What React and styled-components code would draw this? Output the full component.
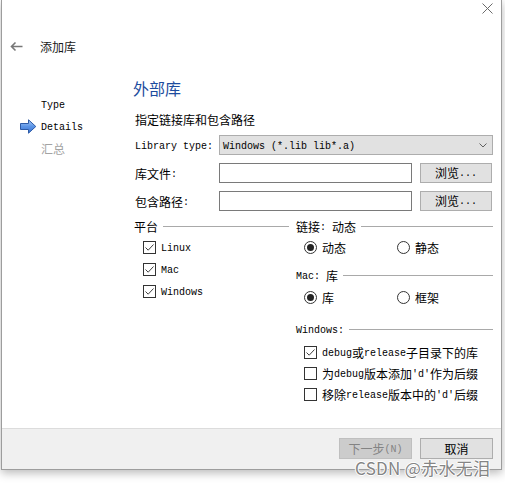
import React from "react";
import styled, { createGlobalStyle } from "styled-components";

const GlobalStyle = createGlobalStyle`
  html, body {
    margin: 0;
    padding: 0;
    background: #fff;
  }
  body {
    font-family: "Noto Sans CJK SC", "Noto Sans", sans-serif;
    font-size: 12px;
    color: #000;
    overflow: hidden;
    text-autospace: no-autospace;
  }
`;

const Page = styled.div`
  position: relative;
  width: 505px;
  height: 485px;
`;

const Dialog = styled.div`
  box-sizing: border-box;
  margin-left: 1px;
  width: 501px;
  height: 470px;
  border: 1px solid #9d9d9d;
  border-top: none;
  background: #fff;
  display: flex;
  flex-direction: column;
  box-shadow: 0 3px 9px rgba(0, 0, 0, 0.28);
`;

const TopBar = styled.div`
  box-sizing: border-box;
  height: 30px;
  display: flex;
  justify-content: flex-end;
  padding: 3px 8px 0 0;
`;

const Header = styled.div`
  height: 32px;
  display: flex;
  align-items: center;
  gap: 17px;
  padding-left: 8px;
  color: #1a1a1a;
`;

const Body = styled.div`
  flex: 1;
  display: flex;
  min-height: 0;
`;

const Nav = styled.div`
  box-sizing: border-box;
  width: 131px;
  flex: none;
  padding: 31px 0 0 18px;
`;

const NavItem = styled.div`
  height: 22px;
  display: flex;
  align-items: center;
  color: ${p => (p.$muted ? "#a3a3a3" : "#000")};
`;

const Marker = styled.span`
  width: 21px;
  flex: none;
  display: flex;
  align-items: center;
`;

const Content = styled.div`
  flex: 1;
  min-width: 0;
  padding: 16px 8px 0 0;
`;

const Heading = styled.h1`
  height: 20px;
  margin: 0 0 12px;
  font-size: 16px;
  line-height: 20px;
  font-weight: normal;
  color: #1d4c9e;
`;

const Intro = styled.div`
  height: 20px;
  line-height: 20px;
  margin-bottom: 5px;
  padding-left: 2px;
`;

const Form = styled.div`
  display: grid;
  grid-template-columns: 84px 1fr;
  grid-auto-rows: 20px;
  row-gap: 8px;
  padding-left: 2px;
`;

const Label = styled.div`
  display: flex;
  align-items: center;
  white-space: nowrap;
`;

const Combo = styled.div`
  box-sizing: border-box;
  height: 20px;
  display: flex;
  align-items: center;
  justify-content: space-between;
  padding: 0 5px 0 3px;
  border: 1px solid #adadad;
  background: #e1e1e1;
`;

const PathRow = styled.div`
  display: flex;
  gap: 8px;
`;

const TextInput = styled.input`
  box-sizing: border-box;
  width: 193px;
  height: 20px;
  margin: 0;
  border: 1px solid #7a7a7a;
  background: #fff;
  outline: none;
`;

const PushButton = styled.button`
  box-sizing: border-box;
  width: ${p => p.$width || 72}px;
  height: ${p => p.$height || 20}px;
  margin: 0;
  padding: 0;
  font-family: inherit;
  font-size: 12px;
  line-height: 1;
  border: 1px solid ${p => (p.disabled ? "#bfbfbf" : "#adadad")};
  background: ${p => (p.disabled ? "#cccccc" : "#e1e1e1")};
  color: ${p => (p.disabled ? "#838383" : "#000")};
`;

const Options = styled.div`
  display: grid;
  grid-template-columns: 155px minmax(0, 1fr);
  column-gap: 7px;
  margin-top: 5px;
  padding-left: 1px;
`;

const Column = styled.div`
  display: flex;
  flex-direction: column;
`;

const GroupHead = styled.div`
  height: ${p => p.$h || 20}px;
  margin-top: ${p => p.$top || 0}px;
  display: flex;
  align-items: center;
  gap: 5px;
  white-space: nowrap;

  &::after {
    content: "";
    flex: 1;
    height: 1px;
    background: #a9a9a9;
  }
`;

const CheckRow = styled.div`
  height: ${p => p.$h || 22}px;
  display: flex;
  align-items: center;
  gap: 5px;
  padding-left: ${p => p.$indent || 9}px;
  white-space: nowrap;
`;

const Box = styled.span`
  box-sizing: border-box;
  width: 13px;
  height: 13px;
  flex: none;
  border: 1px solid #333;
  background: #fff;
  display: flex;
`;

const RadioRow = styled.div`
  height: 22px;
  display: grid;
  grid-template-columns: 93px 1fr;
  align-items: center;
  padding-left: 8px;
`;

const RadioItem = styled.span`
  display: flex;
  align-items: center;
  gap: 5px;
`;

const Circle = styled.span`
  box-sizing: border-box;
  width: 13px;
  height: 13px;
  flex: none;
  border-radius: 50%;
  border: 1px solid #333;
  display: grid;
  place-items: center;

  &::after {
    content: "";
    width: 7px;
    height: 7px;
    border-radius: 50%;
    background: ${p => (p.$on ? "#222" : "transparent")};
  }
`;

const Spacer = styled.div`
  height: ${p => p.$h}px;
`;

const Footer = styled.div`
  box-sizing: border-box;
  height: 41px;
  flex: none;
  display: flex;
  justify-content: flex-end;
  align-items: flex-start;
  gap: 8px;
  padding: 9px 8px 0 0;
  border-top: 1px solid #dcdcdc;
  background: #f0f0f0;
`;

const Watermark = styled.div`
  position: absolute;
  left: 355px;
  top: 459px;
  font-size: 17px;
  line-height: 17px;
  color: #858585;
  letter-spacing: 0.3px;
  text-shadow: 1px 0 #fff, -1px 0 #fff, 0 1px #fff, 0 -1px #fff;
  white-space: nowrap;
`;

const Latin = styled.span`
  font-family: "Liberation Mono", "DejaVu Sans Mono", monospace;
  font-size: 10px;
  vertical-align: 2px;
`;

// ASCII runs take the narrow mono face, CJK stays in the 12px sans
const Txt = ({ children }) => (
  <span>
    {String(children)
      .split(/([\x20-\x7e]+)/)
      .filter(Boolean)
      .map((part, i) =>
        /^[\x20-\x7e]+$/.test(part) ? <Latin key={i}>{part}</Latin> : <React.Fragment key={i}>{part}</React.Fragment>
      )}
  </span>
);

const CloseIcon = () => (
  <svg width="11" height="11" viewBox="0 0 11 11">
    <path d="M0.5 0.5 L10.5 10.5 M10.5 0.5 L0.5 10.5" stroke="#6b6b6b" strokeWidth="1" fill="none" />
  </svg>
);

const BackIcon = () => (
  <svg width="13" height="11" viewBox="0 0 13 11">
    <path d="M12.5 5.5 H1.5 M5.5 1.5 L1.5 5.5 L5.5 9.5" stroke="#777" strokeWidth="1.6" fill="none" />
  </svg>
);

const StepArrow = () => (
  <svg width="17" height="15" viewBox="0 0 17 15">
    <defs>
      <linearGradient id="stepFill" x1="0" y1="0" x2="0" y2="1">
        <stop offset="0" stopColor="#a9ccf7" />
        <stop offset="0.5" stopColor="#5b94e6" />
        <stop offset="1" stopColor="#3a72d0" />
      </linearGradient>
    </defs>
    <path
      d="M0.5 4.5 H8.5 V0.8 L15.8 7.5 L8.5 14.2 V10.5 H0.5 Z"
      fill="url(#stepFill)"
      stroke="#2d5aa6"
      strokeWidth="1"
      strokeLinejoin="round"
    />
  </svg>
);

const Chevron = () => (
  <svg width="8" height="5" viewBox="0 0 8 5">
    <path d="M0.5 0.5 L4 4 L7.5 0.5" stroke="#606060" strokeWidth="1" fill="none" />
  </svg>
);

const Check = ({ on }) => (
  <Box>
    {on && (
      <svg width="11" height="11" viewBox="0 0 11 11">
        <path d="M1.5 5.5 L4.2 8.2 L9.5 2.5" stroke="#404040" strokeWidth="1" fill="none" />
      </svg>
    )}
  </Box>
);

const platforms = ["Linux", "Mac", "Windows"];

const winOptions = [
  { text: "debug或release子目录下的库", on: true },
  { text: "为debug版本添加'd'作为后缀", on: false },
  { text: "移除release版本中的'd'后缀", on: false },
];

const Radios = ({ left, right }) => (
  <RadioRow>
    <RadioItem>
      <Circle $on />
      {left}
    </RadioItem>
    <RadioItem>
      <Circle />
      {right}
    </RadioItem>
  </RadioRow>
);

export default function App() {
  return (
    <Page>
      <GlobalStyle />
      <Dialog>
        <TopBar>
          <CloseIcon />
        </TopBar>
        <Header>
          <BackIcon />
          <span>添加库</span>
        </Header>
        <Body>
          <Nav>
            <NavItem>
              <Marker />
              <Txt>Type</Txt>
            </NavItem>
            <NavItem>
              <Marker>
                <StepArrow />
              </Marker>
              <Txt>Details</Txt>
            </NavItem>
            <NavItem $muted>
              <Marker />
              汇总
            </NavItem>
          </Nav>
          <Content>
            <Heading>外部库</Heading>
            <Intro>指定链接库和包含路径</Intro>
            <Form>
              <Label>
                <Txt>Library type:</Txt>
              </Label>
              <Combo>
                <Txt>Windows (*.lib lib*.a)</Txt>
                <Chevron />
              </Combo>
              <Label>
                <Txt>库文件:</Txt>
              </Label>
              <PathRow>
                <TextInput readOnly />
                <PushButton>
                  <Txt>浏览...</Txt>
                </PushButton>
              </PathRow>
              <Label>
                <Txt>包含路径:</Txt>
              </Label>
              <PathRow>
                <TextInput readOnly />
                <PushButton>
                  <Txt>浏览...</Txt>
                </PushButton>
              </PathRow>
            </Form>
            <Options>
              <Column>
                <GroupHead>平台</GroupHead>
                {platforms.map(name => (
                  <CheckRow key={name}>
                    <Check on />
                    <Txt>{name}</Txt>
                  </CheckRow>
                ))}
              </Column>
              <Column>
                <GroupHead>
                  <Txt>链接: 动态</Txt>
                </GroupHead>
                <Radios left="动态" right="静态" />
                <GroupHead $h={22} $top={6}>
                  <Txt>Mac: 库</Txt>
                </GroupHead>
                <Radios left="库" right="框架" />
                <GroupHead $h={22} $top={10}>
                  <Txt>Windows:</Txt>
                </GroupHead>
                <Spacer $h={2} />
                {winOptions.map(opt => (
                  <CheckRow key={opt.text} $h={21} $indent={8}>
                    <Check on={opt.on} />
                    <Txt>{opt.text}</Txt>
                  </CheckRow>
                ))}
              </Column>
            </Options>
          </Content>
        </Body>
        <Footer>
          <PushButton disabled $width={73} $height={21}>
            <Txt>下一步(N)</Txt>
          </PushButton>
          <PushButton $width={73} $height={21}>
            取消
          </PushButton>
        </Footer>
      </Dialog>
      <Watermark>CSDN @赤水无泪</Watermark>
    </Page>
  );
}
